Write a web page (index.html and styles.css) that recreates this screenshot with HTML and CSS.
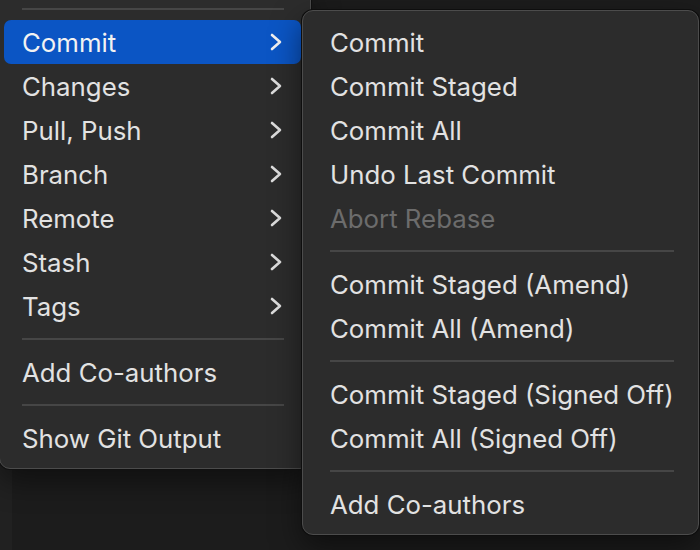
FILE: index.html
```html
<!DOCTYPE html>
<html>
<head>
<meta charset="utf-8">
<link rel="stylesheet" href="styles.css">
</head>
<body>
<div class="desktop">
  <div class="sidebar"></div>
  <div class="editor"></div>
</div>

<div class="menu main-menu">
  <div class="sep"></div>
  <div class="item active"><span>Commit</span><svg class="chev" viewBox="0 0 12 18"><polyline points="2,2 10,9 2,16"/></svg></div>
  <div class="item"><span>Changes</span><svg class="chev" viewBox="0 0 12 18"><polyline points="2,2 10,9 2,16"/></svg></div>
  <div class="item"><span>Pull, Push</span><svg class="chev" viewBox="0 0 12 18"><polyline points="2,2 10,9 2,16"/></svg></div>
  <div class="item"><span>Branch</span><svg class="chev" viewBox="0 0 12 18"><polyline points="2,2 10,9 2,16"/></svg></div>
  <div class="item"><span>Remote</span><svg class="chev" viewBox="0 0 12 18"><polyline points="2,2 10,9 2,16"/></svg></div>
  <div class="item"><span>Stash</span><svg class="chev" viewBox="0 0 12 18"><polyline points="2,2 10,9 2,16"/></svg></div>
  <div class="item"><span>Tags</span><svg class="chev" viewBox="0 0 12 18"><polyline points="2,2 10,9 2,16"/></svg></div>
  <div class="sep"></div>
  <div class="item"><span>Add Co-authors</span></div>
  <div class="sep"></div>
  <div class="item"><span>Show Git Output</span></div>
</div>

<div class="menu sub-menu">
  <div class="item"><span>Commit</span></div>
  <div class="item"><span>Commit Staged</span></div>
  <div class="item"><span>Commit All</span></div>
  <div class="item"><span>Undo Last Commit</span></div>
  <div class="item disabled"><span>Abort Rebase</span></div>
  <div class="sep"></div>
  <div class="item"><span>Commit Staged (Amend)</span></div>
  <div class="item"><span>Commit All (Amend)</span></div>
  <div class="sep"></div>
  <div class="item"><span>Commit Staged (Signed Off)</span></div>
  <div class="item"><span>Commit All (Signed Off)</span></div>
  <div class="sep"></div>
  <div class="item"><span>Add Co-authors</span></div>
</div>
</body>
</html>
```
FILE: styles.css
```css
* { box-sizing: border-box; }

html, body {
  margin: 0;
  padding: 0;
  width: 700px;
  height: 550px;
  overflow: hidden;
  background: #1c1c1c;
  font-family: Inter, "Noto Sans", "DejaVu Sans", sans-serif;
}

.desktop {
  display: grid;
  grid-template-columns: 12px 1fr;
  height: 550px;
}

.sidebar { background: #212121; }
.editor { background: #1c1c1c; }

.menu {
  position: absolute;
  background: #2c2c2c;
  border: 1px solid #4c4c4c;
  display: flex;
  flex-direction: column;
  color: #e2e2e2;
  font-size: 25.8px;
}

.main-menu {
  left: -1px;
  top: -13px;
  width: 312px;
  padding: 10px 0 8px;
  border-radius: 11px;
  box-shadow: 0 0 0 1px #111, 0 12px 30px rgba(0,0,0,0.45);
}

.sub-menu {
  left: 302px;
  top: 10px;
  width: 397px;
  padding: 9px 0 8px;
  border-radius: 11px;
  box-shadow: 0 0 0 1px #0e0e0e, 0 12px 30px rgba(0,0,0,0.5);
}

.item {
  height: 44px;
  display: flex;
  align-items: center;
  justify-content: space-between;
  border-radius: 7px;
  white-space: nowrap;
}

.main-menu .item {
  margin: 0 9px 0 4px;
  padding: 0 19px 0 18px;
}

.sub-menu .item {
  margin: 0 5px 0 4px;
  padding: 0 10px 0 23px;
}

.item.active {
  background: #0b55c4;
  color: #f2f2f2;
}

.item.disabled { color: #6c6c6c; }

.sep {
  height: 22px;
  display: flex;
  align-items: center;
}

.sep::after {
  content: "";
  display: block;
  width: 100%;
  height: 2px;
  background: #464646;
}

.main-menu .sep { padding: 0 26px 0 22px; }
.sub-menu .sep { padding: 0 24px 0 27px; }

.chev {
  width: 12px;
  height: 18px;
  fill: none;
  stroke: #dcdcdc;
  stroke-width: 2.6;
  stroke-linecap: round;
  stroke-linejoin: round;
}

.item.active .chev { stroke: #f0f0f0; }
```
